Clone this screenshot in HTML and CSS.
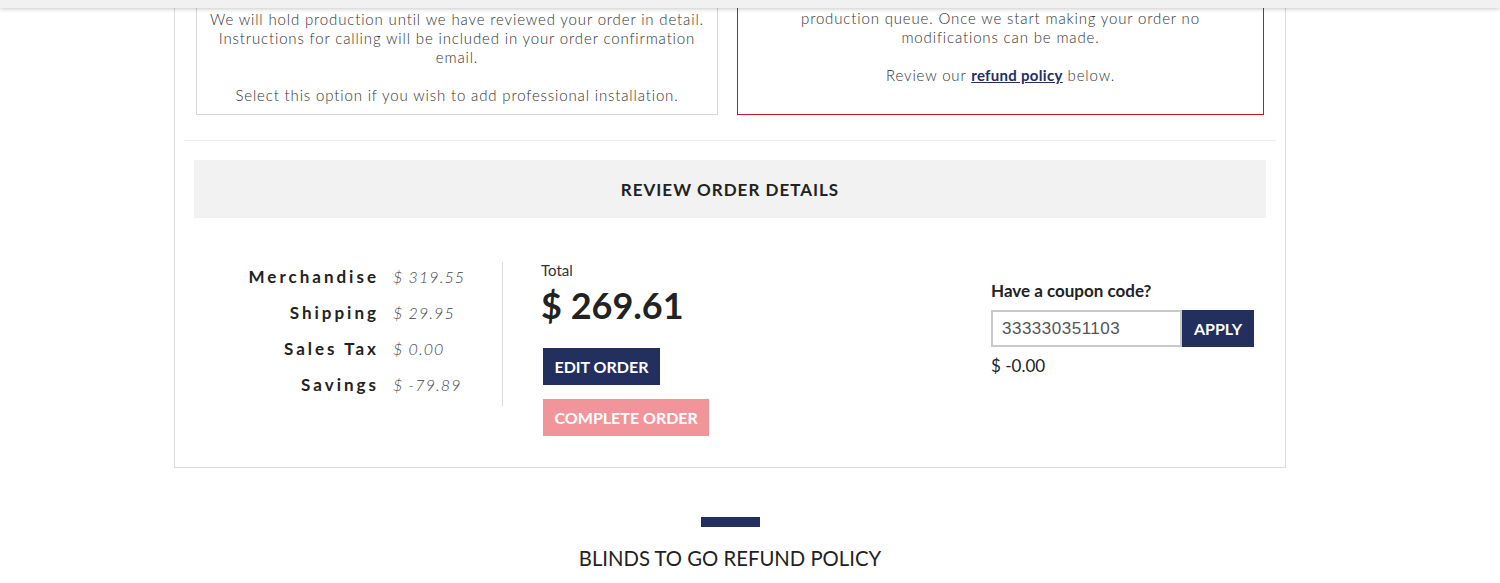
FILE: index.html
```html
<!DOCTYPE html>
<html lang="en">
<head>
<meta charset="utf-8">
<title>Review Order</title>
<link rel="stylesheet" href="styles.css">
</head>
<body>
<header class="topbar"></header>
<main class="checkout">
  <section class="options">
    <div class="option">
      <p>We will hold production until we have reviewed your order in detail. Instructions for calling will be included in your order confirmation email.</p>
      <p>Select this option if you wish to add professional installation.</p>
    </div>
    <div class="option option-selected">
      <p>production queue. Once we start making your order no modifications can be made.</p>
      <p>Review our <a href="#refund" class="link">refund policy</a> below.</p>
    </div>
  </section>
  <hr class="sep">
  <h2 class="review-title">REVIEW ORDER DETAILS</h2>
  <section class="summary">
    <dl class="totals">
      <dt>Merchandise</dt><dd>$ 319.55</dd>
      <dt>Shipping</dt><dd>$ 29.95</dd>
      <dt>Sales Tax</dt><dd>$ 0.00</dd>
      <dt>Savings</dt><dd>$ -79.89</dd>
    </dl>
    <div class="divider"></div>
    <div class="grand">
      <div class="grand-label">Total</div>
      <div class="grand-value">$ 269.61</div>
      <button class="btn btn-navy btn-edit">EDIT ORDER</button>
      <button class="btn btn-pink">COMPLETE ORDER</button>
    </div>
    <div class="coupon">
      <div class="coupon-title">Have a coupon code?</div>
      <div class="coupon-row">
        <input class="coupon-input" type="text" value="333330351103">
        <button class="btn btn-navy btn-apply">APPLY</button>
      </div>
      <div class="coupon-amount">$ -0.00</div>
    </div>
  </section>
</main>
<section class="refund" id="refund">
  <div class="refund-bar"></div>
  <h2 class="refund-title">BLINDS TO GO REFUND POLICY</h2>
</section>
</body>
</html>
```
FILE: styles.css
```css
* { box-sizing: border-box; }
html, body { margin: 0; padding: 0; background: #fff; }
body {
  font-family: Lato, "Liberation Sans", Arial, sans-serif;
  color: #222;
  overflow: hidden;
}
.topbar {
  position: fixed;
  top: 0; left: 0; right: 0;
  height: 8px;
  background: #f1f1f1;
  box-shadow: 0 1px 4px rgba(0,0,0,0.22);
  z-index: 10;
}
.checkout {
  margin-left: 174px;
  width: 1112px;
  border: 1px solid #dcdcdc;
  border-top: none;
  padding-bottom: 31px;
}
.options {
  display: flex;
  gap: 19px;
  padding: 0 21px;
}
.option {
  border: 1px solid #d6d6d6;
  border-top: none;
  padding: 10px 12px 9px;
  text-align: center;
  font-size: 15px;
  font-weight: 300;
  line-height: 19px;
  color: #333;
  letter-spacing: 0.85px;
}
.option:first-child { width: 522px; }
.option-selected {
  width: 527px;
  border-color: #d0112b;
  padding: 9px 20px 9px;
}
.option p { margin: 0 0 19px; }
.option p:last-child { margin-bottom: 0; }
.link {
  color: #232f5e;
  font-weight: 700;
  letter-spacing: 0.3px;
  text-decoration: underline;
}
.sep {
  border: none;
  border-top: 1px solid #ececec;
  margin: 25px 9px 0;
  height: 0;
}
.review-title {
  margin: 19px 19px 0;
  height: 58px;
  background: #f2f2f2;
  display: flex;
  align-items: center;
  justify-content: center;
  font-size: 17px;
  font-weight: 700;
  letter-spacing: 1px;
  color: #222;
}
.summary {
  display: flex;
  align-items: flex-start;
  margin-top: 40px;
}
.totals {
  width: 327px;
  margin: 0;
  display: grid;
  grid-template-columns: 1fr 109px;
  column-gap: 15px;
  grid-auto-rows: 36px;
  align-items: center;
}
.totals dt {
  text-align: right;
  font-weight: 700;
  font-size: 17px;
  letter-spacing: 3px;
  margin-right: -1px;
  color: #222;
}
.totals dd {
  margin: 0;
  font-style: italic;
  font-weight: 300;
  font-size: 16px;
  letter-spacing: 1.1px;
  color: #444;
}
.divider {
  width: 1px;
  height: 144px;
  margin-top: 4px;
  background: #dcdcdc;
}
.grand {
  flex: 1;
  padding-left: 40px;
  padding-top: 3px;
  display: flex;
  flex-direction: column;
  align-items: flex-start;
}
.grand-label {
  font-size: 15px;
  line-height: 18px;
  color: #333;
  margin-left: -2px;
}
.grand-value {
  margin-top: 4px;
  margin-left: -2px;
  font-size: 36px;
  line-height: 44px;
  font-weight: 700;
  color: #222;
}
.btn {
  border: none;
  font-family: Lato, "Liberation Sans", Arial, sans-serif;
  font-weight: 700;
  font-size: 16px;
  color: #fff;
  height: 37px;
  padding: 0 11.5px;
  cursor: pointer;
}
.btn-navy { background: #232f5e; }
.btn-pink { background: #f1959b; margin-top: 14px; }
.btn-edit { margin-top: 21px; }
.coupon {
  width: 294px;
  padding-right: 31px;
  padding-top: 23px;
}
.coupon-title {
  font-size: 17px;
  line-height: 20px;
  font-weight: 700;
  color: #222;
}
.coupon-row {
  display: flex;
  margin-top: 9px;
}
.coupon-input {
  width: 191px;
  height: 37px;
  border: 2px solid #c9c9c9;
  padding: 0 9px;
  font-family: "Liberation Sans", Arial, sans-serif;
  font-size: 17px;
  letter-spacing: 0.5px;
  color: #555;
  outline: none;
}
.btn-apply { width: 72px; padding: 0; }
.coupon-amount {
  margin-top: 9px;
  font-size: 17px;
  line-height: 20px;
  color: #222;
}
.refund {
  margin-left: 174px;
  width: 1112px;
  display: flex;
  flex-direction: column;
  align-items: center;
  padding-top: 49px;
}
.refund-bar {
  width: 59px;
  height: 10px;
  background: #232f5e;
}
.refund-title {
  margin: 19px 0 0;
  font-size: 20.3px;
  line-height: 24px;
  font-weight: 400;
  color: #222;
}
```
